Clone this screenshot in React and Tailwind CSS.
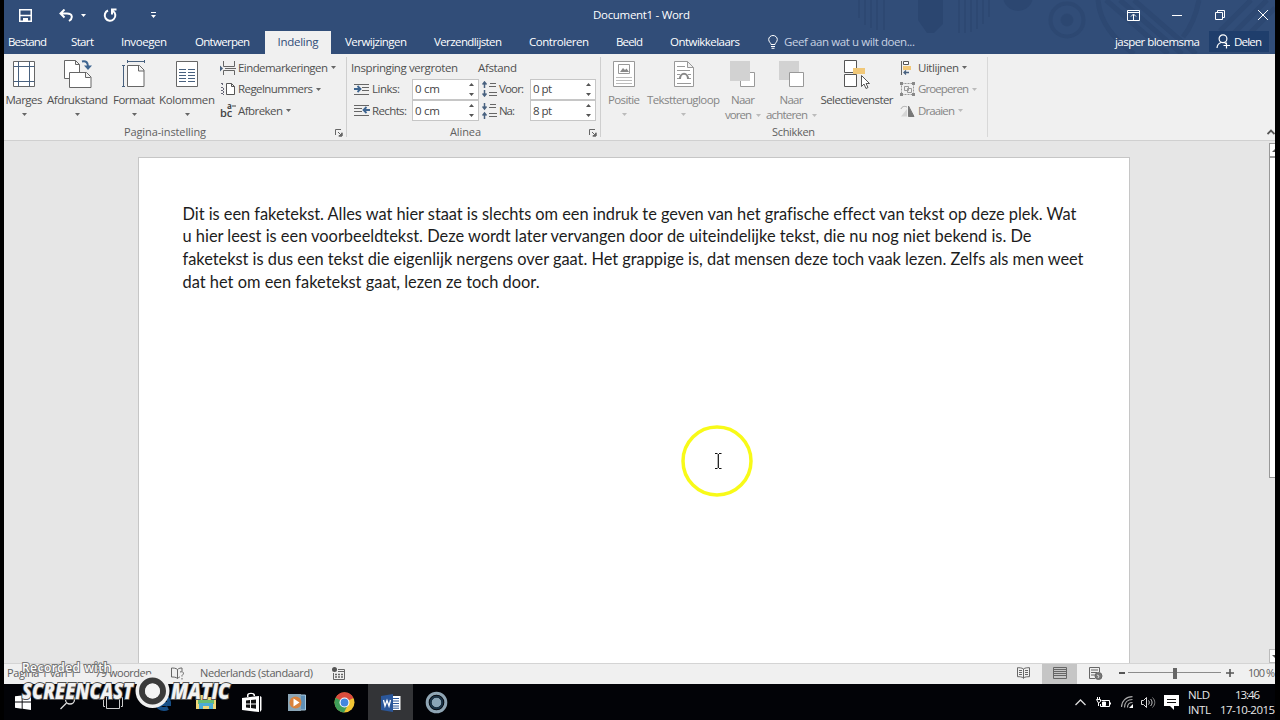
import React, { useLayoutEffect, useRef, useState } from "react";

// Single line of text whose tracking is adjusted to fill its box.
function Fit({ className = "", children }) {
  const box = useRef(null);
  const text = useRef(null);
  const [spacing, setSpacing] = useState(0);
  useLayoutEffect(() => {
    const natural = text.current.getBoundingClientRect().width;
    const room = box.current.getBoundingClientRect().width;
    setSpacing((room - natural) / Math.max(1, String(children).length - 1));
  }, [children]);
  return (
    <span ref={box} className={`block shrink-0 whitespace-nowrap ${className}`}>
      <span ref={text} className="inline-block" style={{ letterSpacing: spacing }}>{children}</span>
    </span>
  );
}

function Caret({ className = "text-[#666]" }) {
  return (
    <svg className={`shrink-0 ${className}`} width="5" height="3" viewBox="0 0 5 3">
      <path d="M0 0h5L2.5 3z" fill="currentColor" />
    </svg>
  );
}

function Launcher() {
  return (
    <svg width="8" height="8" viewBox="0 0 8 8" fill="none" stroke="#666">
      <path d="M.5 6V.5H6M3 3l3 3M7 3.5V7H3.5" />
      <path d="M7 4v3H4z" fill="#666" />
    </svg>
  );
}

function Big({ width, labelWidth, label, icon, dim }) {
  return (
    <div className={`flex shrink-0 flex-col items-center ${width} ${dim ? "text-[#858585]" : "font-medium text-[#505050]"}`}>
      <div className="h-[28px] shrink-0">{icon}</div>
      <Fit className={`${labelWidth} mt-[4px] text-[11.5px] leading-[16px]`}>{label}</Fit>
      <Caret className={`mt-[5px] ${dim ? "text-[#bbb]" : "text-[#666]"}`} />
    </div>
  );
}

function Small({ icon, label, width, dim }) {
  return (
    <div className={`flex h-[21.5px] items-center ${dim ? "text-[#858585]" : "font-medium text-[#505050]"}`}>
      <div className="flex w-[18px] shrink-0 items-center">{icon}</div>
      <Fit className={`${width} text-[11.5px] leading-[16px]`}>{label}</Fit>
      <Caret className={`ml-[3px] ${dim ? "text-[#bbb]" : "text-[#666]"}`} />
    </div>
  );
}

function Spin({ value, width, textWidth }) {
  return (
    <div className={`flex h-[21px] items-center justify-between border border-[#c6c6c6] bg-white pl-[2px] pr-[4px] text-[#444] ${width}`}>
      <Fit className={`text-[11.5px] leading-[16px] ${textWidth}`}>{value}</Fit>
      <svg width="5" height="13" viewBox="0 0 5 13" fill="#555">
        <path d="M0 3L2.500 0 5 3zM0 10h5L2.500 13z" />
      </svg>
    </div>
  );
}

const Marges = () => (
  <svg width="22" height="28" viewBox="0 0 22 28" fill="#fff" stroke="#666">
    <path d="M.5 1.500h21v25H.5z" />
    <path d="M5.500 1.500v25M16.500 1.500v25M.5 6.500h21M.5 21.500h21" stroke="#48617f" />
  </svg>
);
const Afdruk = () => (
  <svg width="28" height="28" viewBox="0 0 28 28" fill="#fff" stroke="#666">
    <path d="M.5.500h11l4 4v14H.5zM11.500.500v4h4" />
    <path d="M5.500 12.500h17l4.500 4.500v10.500H5.500zM21.500 12.500v5h5" />
    <path d="M18 1.500c4-1 6 1 6 5" fill="none" stroke="#3e6590" strokeWidth="2" />
    <path d="M20 5.500h8l-4 4.500z" fill="#3e6590" stroke="none" />
  </svg>
);
const Formaat = () => (
  <svg width="24" height="28" viewBox="0 0 24 28" fill="#fff" stroke="#666">
    <path d="M5.500 5.500h12l4.500 4.500v16.500H5.500zM16.500 5.500V11H22" />
    <path d="M5 1.500h18M5.500 0v3M22.500 0v3M1.500 5v21.500M0 5.500h3M0 26.500h3" fill="none" stroke="#48617f" />
  </svg>
);
const Kolommen = () => (
  <svg width="22" height="28" viewBox="0 0 22 28" fill="#fff" stroke="#666">
    <path d="M.5 1.500h21v25H.5z" />
    <path d="M3 9.500h7M3 12.500h7M3 15.500h7M3 18.500h7M3 21.500h7M12 9.500h7M12 12.500h7M12 15.500h7M12 18.500h7M12 21.500h7" stroke="#48617f" />
  </svg>
);
const Breaks = () => (
  <svg width="16" height="16" viewBox="0 0 16 16" fill="none" stroke="#666">
    <path d="M3.500 1v5.500h11V1M3.500 15v-4.500h11V15M5 8.500h11" />
    <path d="M0 5.500l3 3-3 3z" fill="#48617f" stroke="none" />
  </svg>
);
const LineNos = () => (
  <svg width="16" height="14" viewBox="0 0 16 14" fill="#fff" stroke="#555">
    <path d="M6.500 1.500h5l3 3v8h-8zM11.500 1.500v3h3" />
    <path d="M1 1.500h2M2.500 1v3M1 5.500h3M1 8.500h3M1 11.500h3M3.500 6v7" stroke="#667" strokeDasharray="2 1" />
  </svg>
);
const Hyphen = () => (
  <svg width="17" height="15" viewBox="0 0 17 15" fill="#444" className="overflow-visible">
    <text x="0" y="14" fontSize="11" fontFamily="Open Sans" fontWeight="600">bc</text>
    <text x="7" y="6" fontSize="8" fontFamily="Open Sans" fontWeight="700">a</text>
    <path d="M12 2.500h4v1h-4z" />
  </svg>
);
const Indent = ({ right }) => (
  <svg width="16" height="13" viewBox="0 0 16 13" fill="none" stroke="#666">
    {right ? (
      <>
        <path d="M0 1.500h15M0 4.500h8M0 7.500h8M0 11.500h15" />
        <path d="M16 6H10M12.500 3L9.500 6l3 3" stroke="#3e6590" strokeWidth="1.800" />
      </>
    ) : (
      <>
        <path d="M0 1.500h15M8 4.500h7M8 7.500h7M0 11.500h15" />
        <path d="M0 6h6M3.500 3l3 3-3 3" stroke="#3e6590" strokeWidth="1.800" />
      </>
    )}
  </svg>
);
const Spacing = ({ after }) => (
  <svg width="15" height="16" viewBox="0 0 15 16" fill="none" stroke="#666">
    <path d={after ? "M8 1.500h6M7 4.500h7M7 10.500h8M7 13.500h8" : "M8 2.500h6M7 5.500h7M7 11.500h8M7 14.500h8"} />
    <path d={after ? "M2.500 0v6M.5 3.500l2 2.500 2-2.500M2.500 16v-6M.5 12.500l2-2.500 2 2.500" : "M2.500 7V1M.5 3.500l2-2.500 2 2.500M2.500 9v6M.5 12.500l2 2.500 2-2.500"} stroke="#48617f" strokeWidth="1.500" />
  </svg>
);
const Positie = () => (
  <svg width="22" height="28" viewBox="0 0 22 28" fill="#fff" stroke="#999">
    <path d="M.5 1.500h21v25H.5z" />
    <path d="M5.500 4.500h11v9h-11z" />
    <path d="M7 12l3-4 2 2 1.500-1.500L16 12z" fill="#888" stroke="none" />
    <path d="M3 17.500h16M3 20.500h16M3 23.500h16" stroke="#bbb" />
  </svg>
);
const Wrap = () => (
  <svg width="20" height="28" viewBox="0 0 20 28" fill="#fff" stroke="#999">
    <path d="M.5 1.500h13l6 6v19H.5zM13.500 1.500v6h6" />
    <path d="M3 6.500h8M3 10.500h13M3 14.500h3M14 14.500h3M3 18.500h3M14 18.500h3M3 23.500h14" />
    <path d="M6 19c0-7 8-7 8 0" strokeWidth="2" stroke="#888" />
  </svg>
);
const Front = () => (
  <svg width="26" height="28" viewBox="0 0 26 28">
    <path d="M10.500 12.500h14v14h-14z" fill="#fff" stroke="#999" />
    <path d="M0 1h20v20H0z" fill="#d2d2d2" />
  </svg>
);
const Back = () => (
  <svg width="25" height="28" viewBox="0 0 25 28">
    <path d="M0 1h20v19H0z" fill="#d2d2d2" />
    <path d="M10.500 12.500h14v14h-14z" fill="#fff" stroke="#999" />
  </svg>
);
const Selection = () => (
  <svg width="26" height="29" viewBox="0 0 26 29">
    <path d="M.5.500h12v12H.5zM.5 14.500h12v12H.5z" fill="#fff" stroke="#555" />
    <path d="M9 8h12v6H9z" fill="#f1c878" />
    <path d="M17.500 15.500v11l2.500-2.500 2 4.500 2-1-2-4h3.500z" fill="#fff" stroke="#555" />
  </svg>
);
const Align = () => (
  <svg width="15" height="14" viewBox="0 0 15 14">
    <path d="M1.500 0v14" stroke="#666" fill="none" />
    <path d="M3.500.500h5v3h-5z" fill="#fff" stroke="#555" />
    <path d="M3 5h8v4H3z" fill="#f1c878" />
    <path d="M9 11.500H4M6 9.500l-2 2 2 2" stroke="#48617f" strokeWidth="1.300" fill="none" />
  </svg>
);
const Group = () => (
  <svg width="15" height="14" viewBox="0 0 15 14" fill="none" stroke="#999">
    <path d="M1.500 1.500h12v11h-12z" strokeDasharray="2 1" />
    <path d="M4.500 4.500h4v4h-4zM7.500 6.500h4v4h-4z" />
    <path d="M0 0h3v3H0zM12 0h3v3h-3zM0 11h3v3H0zM12 11h3v3h-3z" fill="#888" stroke="none" />
  </svg>
);
const Rotate = () => (
  <svg width="15" height="12" viewBox="0 0 15 12">
    <path d="M8.500 1v10.500H14z" fill="#777" stroke="#777" />
    <path d="M7 4v7.500H1z" fill="#d5d5d5" />
    <path d="M1 4c1-3 4-3 6-2" stroke="#aaa" fill="none" />
  </svg>
);

const tabs = [
  ["Bestand", "w-[39px] mr-[24px]"],
  ["Start", "w-[23px] mr-[27px]"],
  ["Invoegen", "w-[46px] mr-[28px]"],
  ["Ontwerpen", "w-[55px] mr-[15px]"],
  ["Indeling", "w-[41px]"],
  ["Verwijzingen", "w-[62px] ml-[14px] mr-[27px]"],
  ["Verzendlijsten", "w-[68px] mr-[27px]"],
  ["Controleren", "w-[60px] mr-[27px]"],
  ["Beeld", "w-[27px] mr-[27px]"],
  ["Ontwikkelaars", "w-[70px]"],
];

function Header() {
  return (
    <header className="relative h-[54px] shrink-0 overflow-hidden bg-[#314d78] text-white">
      <svg className="absolute right-0 top-0" width="430" height="54" viewBox="841 0 430 54" fill="none" stroke="#2d4872">
        <path d="M855 0v18M861 0v25M867 0v28M873 0v30M880 0v30M955 0v33M961 0v33M967 0v32M973 0v29M979 0v24M985 0v17" strokeWidth="2" />
        <path d="M914 0v20l9 13h7l9-9V0z" fill="#2b4670" stroke="none" />
        <circle cx="1014" cy="-4" r="15" fill="#2c4771" stroke="none" />
        <circle cx="1063" cy="20" r="16.500" strokeWidth="4" />
        <circle cx="1063" cy="20" r="6" fill="#2c4771" />
        <path d="M1094 0c2 23 16 39 36 54M1102 0l62 54M1116 0l62 54M1130 0l62 54M1195 0c-3 15-7 26-16 37M1216 31l31-31M1224 39l39-39M1234 45l37-37" strokeWidth="5" />
      </svg>
      <div className="relative flex h-[30px] items-center">
        <svg className="ml-[15px] mr-[27px]" width="13" height="13" viewBox="0 0 13 13" fill="none" stroke="#fff" strokeWidth="1.500">
          <path d="M.75.750h11.500v11.500H.75zM1 6.500h11" />
          <path d="M4 9h5v3.500H4z" fill="#fff" stroke="none" />
        </svg>
        <svg width="15" height="13" viewBox="0 0 15 13" fill="none" stroke="#fff" strokeWidth="2">
          <path d="M5.500.500L1.500 4.500l4 4M2 4.500h6c6 0 6 5 2 7.500" />
        </svg>
        <Caret className="ml-[7px] text-white" />
        <svg className="ml-[17px]" width="14" height="14" viewBox="0 0 14 14" fill="none" stroke="#fff" strokeWidth="2">
          <path d="M5 2.500a5.300 5.300 0 1 0 5 .5M9 6.500V1.500h4.500" />
        </svg>
        <svg className="ml-[34px]" width="5" height="7" viewBox="0 0 5 7" fill="#fff">
          <path d="M0 0h5v1H0zM0 3h5L2.500 6z" />
        </svg>
        <Fit className="ml-[437px] w-[97px] text-[11.5px] leading-[16px]">Document1 - Word</Fit>
        <svg className="ml-auto" width="13" height="11" viewBox="0 0 13 11" fill="none" stroke="#fff">
          <path d="M.5.500h12v10H.5zM.5 2.500h12M6.500 10V4.500M4 6.500L6.500 4 9 6.500" />
        </svg>
        <svg className="ml-[32px]" width="10" height="9" viewBox="0 0 10 9" stroke="#fff"><path d="M0 4.500h10" /></svg>
        <svg className="ml-[33px]" width="10" height="10" viewBox="0 0 10 10" fill="none" stroke="#fff">
          <path d="M.5 2.500h7v7h-7zM2.500 2V.500h7v7H8" />
        </svg>
        <svg className="ml-[33px] mr-[7px]" width="10" height="10" viewBox="0 0 10 10" stroke="#fff"><path d="M0 0l10 10M10 0L0 10" /></svg>
      </div>
      <nav className="relative flex h-[24px] items-center pb-[1px] pl-[4px] text-[11.5px] leading-[16px]">
        {tabs.map(([name, cls]) =>
          name === "Indeling" ? (
            <div key={name} className="-mb-[2px] flex h-[23px] items-center bg-[#f0f0f0] px-[12.5px] pb-[2px] text-[#314d78]">
              <Fit className={cls}>{name}</Fit>
            </div>
          ) : (
            <Fit key={name} className={cls}>{name}</Fit>
          )
        )}
        <svg className="ml-[28px] mr-[6px]" width="10" height="14" viewBox="0 0 10 14" fill="none" stroke="#fff">
          <path d="M3 9.500C3 8 .7 7 .7 4.500a4.300 4 0 0 1 8.600 0C9.300 7 7 8 7 9.500zM3 11.500h4M3.500 13.300h3" />
        </svg>
        <Fit className="w-[131px] text-[#c8d2e2]">Geef aan wat u wilt doen...</Fit>
        <Fit className="ml-auto w-[85px]">jasper bloemsma</Fit>
        <div className="ml-[9px] mr-[6px] flex h-[21px] w-[60px] items-center bg-[#1f3e6c] pl-[7px]">
          <svg width="15" height="15" viewBox="0 0 15 15" fill="none" stroke="#fff" strokeWidth="1.200">
            <circle cx="7" cy="4.800" r="3.900" />
            <path d="M1 14c.2-3 1.500-4.600 4-5.500M8.500 8.500l2 1.500M10.500 8.500v6M7.500 11.500h6.500" />
          </svg>
          <Fit className="ml-[3px] w-[28px]">Delen</Fit>
        </div>
      </nav>
    </header>
  );
}

function GroupLabel({ children, className, launcher }) {
  return (
    <div className="flex h-[16px] items-center text-[11px] font-medium leading-[16px] text-[#606060]">
      <Fit className={className}>{children}</Fit>
      {launcher && <div className="ml-auto mr-[3px] pt-[1px]"><Launcher /></div>}
    </div>
  );
}

function ArrangeTwo({ icon, a, aw, b, bw, width }) {
  return (
    <div className={`flex shrink-0 flex-col items-center text-[11.5px] leading-[16px] text-[#858585] ${width}`}>
      <div className="h-[28px] shrink-0">{icon}</div>
      <Fit className={`mt-[4px] ${aw}`}>{a}</Fit>
      <div className="-mt-[1px] flex items-center gap-[4px]">
        <Fit className={bw}>{b}</Fit>
        <Caret className="text-[#bbb]" />
      </div>
    </div>
  );
}

function Ribbon() {
  return (
    <section className="flex h-[87px] shrink-0 border-b border-[#d0d0d0] bg-[#f0f0f0]">
      <div className="flex w-[342px] shrink-0 flex-col justify-between pt-[3px]">
        <div className="flex h-[66px]">
          <div className="flex pt-[3px]">
            <Big width="w-[40px]" labelWidth="w-[37px]" label="Marges" icon={<Marges />} />
            <Big width="w-[67px]" labelWidth="w-[61px]" label="Afdrukstand" icon={<Afdruk />} />
            <Big width="w-[46px]" labelWidth="w-[42px]" label="Formaat" icon={<Formaat />} />
            <Big width="w-[60px]" labelWidth="w-[56px]" label="Kolommen" icon={<Kolommen />} />
          </div>
          <div className="flex flex-col pl-[3px]">
            <Small icon={<Breaks />} label="Eindemarkeringen" width="w-[90px]" />
            <Small icon={<LineNos />} label="Regelnummers" width="w-[75px]" />
            <Small icon={<Hyphen />} label="Afbreken" width="w-[45px]" />
          </div>
        </div>
        <GroupLabel className="ml-[120px] w-[82px]" launcher>Pagina-instelling</GroupLabel>
      </div>
      <div className="my-[3px] w-px shrink-0 bg-[#cfcfcf]" />
      <div className="flex w-[253px] shrink-0 flex-col justify-between pt-[3px] text-[11.5px] leading-[16px] text-[#505050]">
        <div className="h-[66px] font-medium">
          <div className="flex h-[21px] items-center pl-[4px]">
            <Fit className="w-[107px]">Inspringing vergroten</Fit>
            <Fit className="ml-[20px] w-[39px]">Afstand</Fit>
          </div>
          <div className="flex h-[22px] items-center pl-[7px]">
            <Indent />
            <Fit className="ml-[2px] w-[28px]">Links:</Fit>
            <div className="ml-auto flex items-center pr-[4px] font-normal">
              <Spin value="0 cm" width="w-[67px]" textWidth="w-[25px]" />
              <div className="flex w-[51px] items-center pl-[3px] font-medium"><Spacing /><Fit className="ml-[2px] w-[25px]">Voor:</Fit></div>
              <Spin value="0 pt" width="w-[66px]" textWidth="w-[19px]" />
            </div>
          </div>
          <div className="flex h-[21px] items-center pl-[7px]">
            <Indent right />
            <Fit className="ml-[2px] w-[35px]">Rechts:</Fit>
            <div className="ml-auto flex items-center pr-[4px] font-normal">
              <Spin value="0 cm" width="w-[67px]" textWidth="w-[25px]" />
              <div className="flex w-[51px] items-center pl-[3px] font-medium"><Spacing after /><Fit className="ml-[2px] w-[16px]">Na:</Fit></div>
              <Spin value="8 pt" width="w-[66px]" textWidth="w-[19px]" />
            </div>
          </div>
        </div>
        <GroupLabel className="ml-[103px] w-[31px]" launcher>Alinea</GroupLabel>
      </div>
      <div className="my-[3px] w-px shrink-0 bg-[#cfcfcf]" />
      <div className="flex w-[386px] shrink-0 flex-col justify-between pt-[3px]">
        <div className="flex h-[66px]">
          <div className="flex pt-[3px]">
            <Big dim width="w-[46px]" labelWidth="w-[32px]" label="Positie" icon={<Positie />} />
            <Big dim width="w-[73px]" labelWidth="w-[73px]" label="Tekstterugloop" icon={<Wrap />} />
            <ArrangeTwo width="w-[46px]" icon={<Front />} a="Naar" aw="w-[24px]" b="voren" bw="w-[27px]" />
            <ArrangeTwo width="w-[51px]" icon={<Back />} a="Naar" aw="w-[24px]" b="achteren" bw="w-[42px]" />
            <div className="flex w-[80px] flex-col items-center text-[11.5px] font-medium leading-[16px] text-[#505050]">
              <div className="h-[28px] shrink-0"><Selection /></div>
              <Fit className="mt-[4px] w-[73px]">Selectievenster</Fit>
            </div>
          </div>
          <div className="flex flex-col pl-[3px]">
            <Small icon={<Align />} label="Uitlijnen" width="w-[41px]" />
            <Small dim icon={<Group />} label="Groeperen" width="w-[51px]" />
            <Small dim icon={<Rotate />} label="Draaien" width="w-[37px]" />
          </div>
        </div>
        <GroupLabel className="ml-[171px] w-[43px]">Schikken</GroupLabel>
      </div>
      <div className="my-[3px] w-px shrink-0 bg-[#d8d8d8]" />
      <div className="flex flex-1 items-end justify-end pb-[5px]">
        <svg width="8" height="6" viewBox="0 0 8 6" fill="none" stroke="#555" strokeWidth="1.800"><path d="M.5 5L4 1.500 7.500 5" /></svg>
      </div>
    </section>
  );
}

function Doc() {
  return (
    <main className="flex min-h-0 flex-1 bg-[#e6e6e6]">
      <article className="relative ml-[134px] mt-[16px] w-[992px] shrink-0 border border-b-0 border-[#c6c6c6] bg-white pl-[43.5px] pt-[44.5px] font-[Lato] text-[16.4px] leading-[22.9px] text-[#1c1c1c]">
        <Fit className="w-[893px]">Dit is een faketekst. Alles wat hier staat is slechts om een indruk te geven van het grafische effect van tekst op deze plek. Wat</Fit>
        <Fit className="w-[849px]">u hier leest is een voorbeeldtekst. Deze wordt later vervangen door de uiteindelijke tekst, die nu nog niet bekend is. De</Fit>
        <Fit className="w-[901px]">faketekst is dus een tekst die eigenlijk nergens over gaat. Het grappige is, dat mensen deze toch vaak lezen. Zelfs als men weet</Fit>
        <Fit className="w-[357px]">dat het om een faketekst gaat, lezen ze toch door.</Fit>
        <svg className="absolute left-[541px] top-[266px]" width="74" height="74" viewBox="0 0 74 74" fill="none">
          <circle cx="37" cy="37" r="34" stroke="#f8fa18" strokeWidth="3.500" />
          <path d="M35 29.500h2.500M39 29.500h2.500M38.300 30v14M35 44.500h2.500M39 44.500h2.500" stroke="#111" strokeWidth="1.200" />
        </svg>
      </article>
      <div className="ml-auto flex w-[6px] flex-col overflow-hidden pt-[2px]">
        <div className="flex h-[14px] shrink-0 items-center border border-r-0 border-[#999] bg-white pl-[2px]"><svg width="3" height="3" viewBox="0 0 3 3"><path d="M0 3L3 0v3z" fill="#555" /></svg></div>
        <div className="h-[321px] shrink-0 border border-r-0 border-[#999] bg-white" />
        <div className="mt-auto flex h-[14px] items-center border border-r-0 border-[#bbb] bg-white pl-[2px]"><svg width="3" height="3" viewBox="0 0 3 3"><path d="M0 0h3v3z" fill="#555" /></svg></div>
      </div>
    </main>
  );
}

function Status() {
  return (
    <footer className="flex h-[21px] shrink-0 items-center border-t border-[#d4d4d4] bg-[#f0f0f0] pb-[2px] text-[11px] font-medium leading-[16px] text-[#606060]">
      <Fit className="ml-[3px] w-[69px]">Pagina 1 van 1</Fit>
      <Fit className="ml-[19px] w-[57px]">79 woorden</Fit>
      <svg className="ml-[19px]" width="14" height="13" viewBox="0 0 14 13" fill="none" stroke="#666">
        <path d="M6.500 2.500C5 1 2 1 .5 1v9c2 0 4.500 0 6 1.500V2.500C8 1 10 1 11 1v3M6.500 11.500C8 10 9 10 9 10M9 5c3-1 5 1 2 3.500v1M11 11v1.500" />
      </svg>
      <Fit className="ml-[15px] w-[113px]">Nederlands (standaard)</Fit>
      <svg className="ml-[19px]" width="13" height="13" viewBox="0 0 13 13" fill="none" stroke="#666">
        <path d="M6 2.500h6.500v10h-11V6M6 4.500h6" />
        <path d="M3 7.500h8M3 10h8" strokeDasharray="2 1" strokeWidth="1.500" />
        <circle cx="2.500" cy="2.500" r="2.500" fill="#555" stroke="none" />
      </svg>
      <div className="-mb-[2px] ml-auto flex h-[20px] items-center">
        <svg className="mb-[2px]" width="13" height="12" viewBox="0 0 13 12" fill="none" stroke="#666">
          <path d="M6.500 2C5 .7 2 .7.500.700v9c2 0 4.500 0 6 1.300 1.500-1.300 4-1.300 6-1.300v-9c-2 0-4.500 0-6 1.300v9.500M2 3.500h3M2 5.500h3M2 7.500h3M8 3.500h3M8 5.500h3M8 7.500h3" />
        </svg>
        <div className="ml-[12px] flex h-full w-[35px] items-center justify-center bg-[#c5c5c5] pb-[2px]">
          <svg width="14" height="12" viewBox="0 0 14 12" fill="none" stroke="#666">
            <path d="M.5.500h13v11H.5zM1 2.500h12M1 4.500h12M1 6.500h12M1 8.500h12" />
          </svg>
        </div>
        <svg className="mb-[2px] ml-[12px]" width="14" height="13" viewBox="0 0 14 13" fill="none" stroke="#666">
          <path d="M6 11.500H.5V.500h10V5M2 3h7M2 5.500h6M2 8h4" />
          <circle cx="9.500" cy="9" r="3.500" fill="#777" />
          <path d="M8 8l2 1-1 2" stroke="#ddd" />
        </svg>
        <div className="mb-[2px] ml-[16px] h-[2px] w-[6px] bg-[#555]" />
        <div className="mb-[2px] ml-[3px] flex h-[12px] w-[93px] items-center justify-center bg-linear-to-b from-transparent from-45% via-[#777] via-46% to-transparent to-54%">
          <div className="h-[11px] w-[4px] bg-[#666]" />
        </div>
        <svg className="mb-[2px] ml-[5px]" width="8" height="8" viewBox="0 0 8 8" stroke="#555" strokeWidth="1.600"><path d="M0 4h8M4 0v8" /></svg>
        <Fit className="mb-[2px] ml-[14px] w-[27px]">100 %</Fit>
      </div>
    </footer>
  );
}

function Taskbar() {
  return (
    <div className="flex h-[36px] shrink-0 items-center bg-[#020307] text-white">
      <svg className="ml-[11px]" width="16" height="16" viewBox="0 0 16 16" fill="#fff">
        <path d="M0 2.300L6.700 1.400v6.200H0zM7.600 1.300L16 0v7.600H7.600zM0 8.500h6.700v6.200L0 13.800zM7.600 8.500H16V16l-8.400-1.200z" />
      </svg>
      <svg className="ml-[29px]" width="16" height="16" viewBox="0 0 16 16" fill="none" stroke="#ddd" strokeWidth="1.300">
        <circle cx="10" cy="5.500" r="4.500" /><path d="M6.500 9L.5 15" />
      </svg>
      <svg className="ml-[27px]" width="20" height="14" viewBox="0 0 20 14" fill="none" stroke="#ccc">
        <path d="M3.500.500h13v13h-13zM2 2.500H.5v9H2M18 2.500h1.500v9H18" />
      </svg>
      <svg className="ml-[29px]" width="19" height="19" viewBox="0 0 19 19" fill="none">
        <path d="M2 9C4 2 16 1 17 9v2H6c0 5 6 6 10 4" stroke="#174f87" strokeWidth="4" />
      </svg>
      <svg className="ml-[25px]" width="20" height="16" viewBox="0 0 20 16">
        <path d="M0 1h7l1 2h12v12H0z" fill="#efd779" /><path d="M2 6h16v4H2z" fill="#66bd74" />
        <path d="M3 15V9h14v6h-4v-3H7v3z" fill="#4bacd5" />
      </svg>
      <svg className="ml-[26px]" width="20" height="21" viewBox="0 0 20 21" fill="#fff">
        <path d="M5 5V3c0-3 8-3 8 0v1h-1.500V3c0-1.500-5-1.500-5 0v2zM0 6l17-2v16L0 18zM18 4l1.500 1v13L18 20z" />
        <path d="M4 8.500L8 8v3.500H4zM9 8l5-.6v4.100H9zM4 12.500h4V16l-4-.5zM9 12.500h5v4.300L9 16z" fill="#111" />
      </svg>
      <svg className="ml-[26px]" width="19" height="17" viewBox="0 0 19 17">
        <path d="M5 1h12.500v15H5z" fill="#5e8fb6" stroke="#a6c5da" /><path d="M0 0h13v17H0z" fill="#8aa5b6" />
        <circle cx="7.500" cy="8.500" r="6" fill="#d9823d" /><path d="M5.500 4.500l6 4-6 4z" fill="#fff" />
      </svg>
      <svg className="ml-[27px]" width="21" height="21" viewBox="0 0 21 21">
        <circle cx="10.500" cy="10.500" r="10" fill="#f1c534" />
        <path d="M10.500 10.500L1.500 6A10 10 0 0 1 19.500 6z" fill="#da4c3e" />
        <path d="M10.500 10.500L1.700 5.800A10 10 0 0 0 10 20.500l4-8z" fill="#3f9e59" />
        <circle cx="10.500" cy="10.500" r="5" fill="#fff" /><circle cx="10.500" cy="10.500" r="3.900" fill="#4387de" />
      </svg>
      <div className="ml-[13px] flex h-full w-[45px] items-center justify-center bg-[#333437] pt-[1px]">
        <svg width="20" height="18" viewBox="0 0 20 18">
          <path d="M9 2h10.500v14H9z" fill="#fff" /><path d="M11 4.500h7M11 7h7M11 9.500h7M11 12h7M11 14.200h7" stroke="#2b579a" />
          <path d="M0 2l12-2v18L0 16z" fill="#2b579a" />
          <path d="M2.500 6l1.500 6 2-5.500L8 12l1.500-6" fill="none" stroke="#fff" strokeWidth="1.300" />
        </svg>
      </div>
      <svg className="ml-[12px]" width="23" height="23" viewBox="0 0 23 23" fill="none">
        <circle cx="11.500" cy="11.500" r="9.300" stroke="#8fa5b4" strokeWidth="3" /><circle cx="11.500" cy="11.500" r="5" fill="#8aa5b7" />
        <circle cx="11.500" cy="11.500" r="6" stroke="#193246" strokeWidth="2" />
      </svg>
      <div className="ml-auto flex items-center">
        <svg width="11" height="7" viewBox="0 0 11 7" fill="none" stroke="#ddd" strokeWidth="1.300"><path d="M.5 6l5-5 5 5" /></svg>
        <svg className="ml-[10px]" width="15" height="11" viewBox="0 0 15 11" fill="none" stroke="#fff">
          <path d="M5.500 3.500h8v6h-9V7M14.500 5.500v2M1.500 0v2M3.500 0v2M.5 2.500h4v2l-2 1.500zM2.500 6v3" /><path d="M6.500 5h3v3.500h-3z" fill="#fff" />
        </svg>
        <svg className="ml-[10px]" width="12" height="12" viewBox="0 0 12 12" fill="none" stroke="#aaa" strokeWidth="1.200">
          <path d="M.5 11C.5 5 5 .7 11.500.700M3.500 11.500c0-5 3-8 8-8M6.500 11.500c0-3 2-5 5-5" /><path d="M8 12l4-4v4z" fill="#fff" stroke="none" />
        </svg>
        <svg className="ml-[8px]" width="15" height="13" viewBox="0 0 15 13" fill="none" stroke="#ddd">
          <path d="M.5 4.500h2l3-3v10l-3-3h-2zM7.500 4.500c1 1 1 3 0 4M9.500 3c2 2 2 5 0 7" /><path d="M11.500 1.500c3 3 3 7 0 10" stroke="#888" />
        </svg>
        <svg className="ml-[8px]" width="15" height="15" viewBox="0 0 15 15" fill="#fff">
          <path d="M0 0h15v11h-5v4l-4-4H0z" /><path d="M3 4.500h9M3 7.500h9" stroke="#111" />
        </svg>
        <div className="ml-[9px] flex flex-col text-[11.5px] leading-[15.500px] text-[#e8e8e8]">
          <Fit className="w-[22px]">NLD</Fit>
          <Fit className="w-[23px]">INTL</Fit>
        </div>
        <div className="ml-[9px] flex flex-col items-center text-[11.5px] leading-[15.500px] text-[#e8e8e8]">
          <Fit className="w-[25px]">13:46</Fit>
          <Fit className="w-[55px]">17-10-2015</Fit>
        </div>
      </div>
    </div>
  );
}

function Watermark() {
  return (
    <svg className="absolute left-[15px] top-[655px]" width="230" height="60" viewBox="15 655 230 60" fontFamily="Open Sans">
      <text x="22" y="672" fontSize="12" textLength="89" fontWeight="600" fill="#fff" stroke="#777" strokeWidth="2" paintOrder="stroke">Recorded with</text>
      <g fontSize="23" fontWeight="800" fontStyle="italic" fill="#f2f2f2" stroke="#555" strokeWidth="2" paintOrder="stroke">
        <text x="22" y="699" textLength="111" lengthAdjust="spacingAndGlyphs">SCREENCAST</text>
        <text x="171" y="699" textLength="59" lengthAdjust="spacingAndGlyphs">MATIC</text>
      </g>
      <circle cx="152.500" cy="691" r="17" fill="#f0f0f0" />
      <circle cx="152.500" cy="691" r="10.500" fill="none" stroke="#3b3b3b" strokeWidth="6" />
      <circle cx="152.500" cy="691" r="7.500" fill="#f4f4f4" />
    </svg>
  );
}

export default function App() {
  return (
    <div className="relative h-[720px] w-[1280px] overflow-hidden bg-black pl-[4px] pr-[5px] font-['Open_Sans',sans-serif]">
      <div className="flex h-full flex-col overflow-hidden">
        <Header />
        <Ribbon />
        <Doc />
        <Status />
        <Taskbar />
      </div>
      <Watermark />
    </div>
  );
}
